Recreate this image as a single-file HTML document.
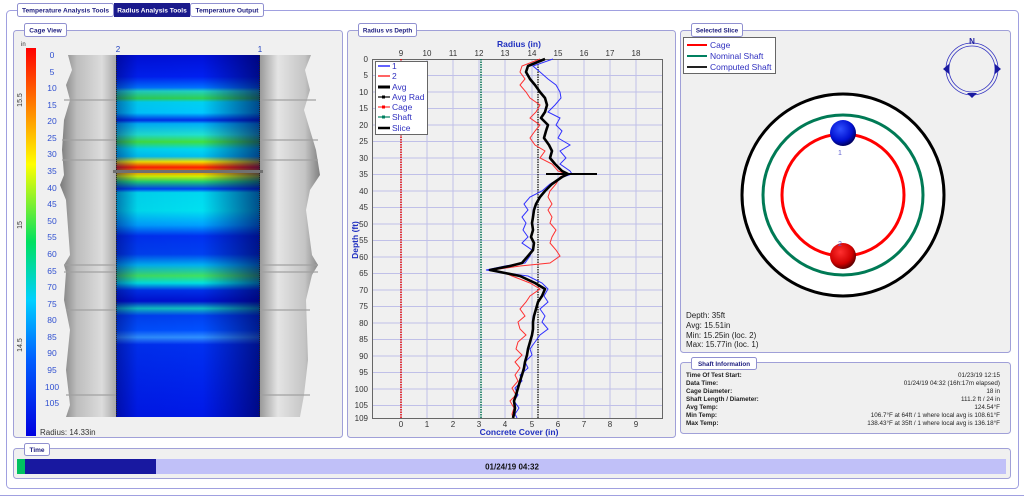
<!DOCTYPE html>
<html><head><meta charset="utf-8"><style>
html,body{margin:0;padding:0;background:#fff;width:1024px;height:498px;overflow:hidden}
svg text{font-family:"Liberation Sans",sans-serif}
</style></head><body>
<svg width="1024" height="498" viewBox="0 0 1024 498" xmlns="http://www.w3.org/2000/svg">
<defs>
<linearGradient id="cb" x1="0" y1="0" x2="0" y2="1">
<stop offset="0" stop-color="#ff0000"/><stop offset="0.15" stop-color="#ff8000"/><stop offset="0.3" stop-color="#ffff00"/><stop offset="0.5" stop-color="#00e060"/><stop offset="0.65" stop-color="#00d0ff"/><stop offset="0.8" stop-color="#0060ff"/><stop offset="1" stop-color="#0000e0"/>
</linearGradient>
<linearGradient id="gl" x1="0" y1="0" x2="1" y2="0">
<stop offset="0" stop-color="#7a7a7a"/><stop offset="0.3" stop-color="#bdbdbd"/><stop offset="0.75" stop-color="#dcdcdc"/><stop offset="1" stop-color="#a8a8a8"/>
</linearGradient>
<linearGradient id="gr" x1="0" y1="0" x2="1" y2="0">
<stop offset="0" stop-color="#9a9a9a"/><stop offset="0.3" stop-color="#e4e4e4"/><stop offset="0.75" stop-color="#c4c4c4"/><stop offset="1" stop-color="#808080"/>
</linearGradient>
<linearGradient id="hm" x1="0" y1="55" x2="0" y2="417" gradientUnits="userSpaceOnUse">
<stop offset="0" stop-color="#0010d8"/><stop offset="0.06" stop-color="#0020f0"/><stop offset="0.09" stop-color="#0070ff"/>
<stop offset="0.1" stop-color="#20d0c0"/><stop offset="0.12" stop-color="#30d050"/><stop offset="0.13" stop-color="#00d0f0"/>
<stop offset="0.16" stop-color="#00c8ff"/><stop offset="0.18" stop-color="#0030e8"/><stop offset="0.19" stop-color="#00b0f8"/>
<stop offset="0.22" stop-color="#20e0d0"/><stop offset="0.24" stop-color="#40e040"/><stop offset="0.26" stop-color="#00d8f0"/>
<stop offset="0.28" stop-color="#00c0f0"/><stop offset="0.295" stop-color="#f0e000"/><stop offset="0.31" stop-color="#ff2000"/>
<stop offset="0.325" stop-color="#f0a000"/><stop offset="0.335" stop-color="#d0f000"/><stop offset="0.35" stop-color="#20d070"/>
<stop offset="0.37" stop-color="#0040f0"/><stop offset="0.38" stop-color="#00d8f0"/><stop offset="0.43" stop-color="#00e0f0"/>
<stop offset="0.47" stop-color="#00a0ff"/><stop offset="0.5" stop-color="#0030f0"/><stop offset="0.55" stop-color="#0040f0"/>
<stop offset="0.58" stop-color="#00b0f0"/><stop offset="0.61" stop-color="#40e060"/><stop offset="0.63" stop-color="#00e0e0"/>
<stop offset="0.65" stop-color="#0030e8"/><stop offset="0.68" stop-color="#0010d0"/><stop offset="0.7" stop-color="#10c0c0"/>
<stop offset="0.72" stop-color="#0040f0"/><stop offset="0.76" stop-color="#0050ff"/><stop offset="0.78" stop-color="#3090ff"/>
<stop offset="0.8" stop-color="#0030f0"/><stop offset="1" stop-color="#0018e8"/>
</linearGradient>
<linearGradient id="hov" x1="0" y1="0" x2="1" y2="0">
<stop offset="0" stop-color="#000060" stop-opacity="0.45"/><stop offset="0.15" stop-color="#000060" stop-opacity="0.05"/><stop offset="0.6" stop-color="#000060" stop-opacity="0"/><stop offset="1" stop-color="#000050" stop-opacity="0.65"/>
</linearGradient>
<radialGradient id="bb" cx="0.4" cy="0.35" r="0.65"><stop offset="0" stop-color="#3050ff"/><stop offset="0.7" stop-color="#0010d0"/><stop offset="1" stop-color="#000060"/></radialGradient>
<radialGradient id="rb" cx="0.4" cy="0.35" r="0.65"><stop offset="0" stop-color="#ff3030"/><stop offset="0.7" stop-color="#d00000"/><stop offset="1" stop-color="#600000"/></radialGradient>
</defs>

<rect x="6.5" y="10.5" width="1012" height="478" rx="4" fill="#fff" stroke="#a0a0e0"/>
<line x1="0" y1="495.5" x2="1024" y2="495.5" stroke="#a0a0e0"/>
<rect x="17.5" y="3.5" width="96" height="13" rx="2" fill="#fff" stroke="#9090d0"/>
<text x="65.5" y="12.5" font-size="6.6" font-weight="bold" fill="#202080" text-anchor="middle">Temperature Analysis Tools</text>
<rect x="114" y="3" width="76" height="14" fill="#1a1a8c"/>
<text x="152" y="12.5" font-size="6.6" font-weight="bold" fill="#fff" text-anchor="middle">Radius Analysis Tools</text>
<rect x="190.5" y="3.5" width="73" height="13" rx="2" fill="#fff" stroke="#9090d0"/>
<text x="227" y="12.5" font-size="6.6" font-weight="bold" fill="#202080" text-anchor="middle">Temperature Output</text>

<rect x="13.5" y="30.5" width="329" height="407" rx="3" fill="#f0f0f0" stroke="#a0a0d8"/>
<rect x="347.5" y="30.5" width="328" height="407" rx="3" fill="#f0f0f0" stroke="#a0a0d8"/>
<rect x="680.5" y="30.5" width="330" height="322" rx="3" fill="#f0f0f0" stroke="#a0a0d8"/>
<rect x="680.5" y="362.5" width="330" height="71" rx="3" fill="#f0f0f0" stroke="#a0a0d8"/>
<rect x="13.5" y="448.5" width="997" height="30" rx="3" fill="#f0f0f0" stroke="#a0a0d8"/>

<rect x="24.5" y="23.5" width="42" height="13" rx="2" fill="#fff" stroke="#9090d0"/>
<text x="45.5" y="32.5" font-size="6.5" font-weight="bold" fill="#202080" text-anchor="middle">Cage View</text>
<rect x="358.5" y="23.5" width="58" height="13" rx="2" fill="#fff" stroke="#9090d0"/>
<text x="387.5" y="32.5" font-size="6.3" font-weight="bold" fill="#202080" text-anchor="middle">Radius vs Depth</text>
<rect x="691.5" y="23.5" width="51" height="13" rx="2" fill="#fff" stroke="#9090d0"/>
<text x="717" y="32.5" font-size="6.3" font-weight="bold" fill="#202080" text-anchor="middle">Selected Slice</text>
<rect x="691.5" y="357.5" width="65" height="12" rx="2" fill="#fff" stroke="#9090d0"/>
<text x="724" y="366" font-size="6.3" font-weight="bold" fill="#202080" text-anchor="middle">Shaft Information</text>
<rect x="24.5" y="443.5" width="25" height="12" rx="2" fill="#fff" stroke="#9090d0"/>
<text x="37" y="452" font-size="6.5" font-weight="bold" fill="#202080" text-anchor="middle">Time</text>

<text x="21" y="46" font-size="6" fill="#333">in</text>
<rect x="26" y="48" width="10" height="388" fill="url(#cb)"/>
<text transform="translate(22,100) rotate(-90)" font-size="7" fill="#333" text-anchor="middle">15.5</text>
<text transform="translate(22,225) rotate(-90)" font-size="7" fill="#333" text-anchor="middle">15</text>
<text transform="translate(22,345) rotate(-90)" font-size="7" fill="#333" text-anchor="middle">14.5</text>
<g font-size="8.5" fill="#3050d0" text-anchor="middle">
<text x="52" y="58">0</text><text x="52" y="75">5</text><text x="52" y="91">10</text><text x="52" y="108">15</text><text x="52" y="124">20</text><text x="52" y="141">25</text><text x="52" y="157">30</text><text x="52" y="174">35</text><text x="52" y="191">40</text><text x="52" y="207">45</text><text x="52" y="224">50</text><text x="52" y="240">55</text><text x="52" y="257">60</text><text x="52" y="274">65</text><text x="52" y="290">70</text><text x="52" y="307">75</text><text x="52" y="323">80</text><text x="52" y="340">85</text><text x="52" y="356">90</text><text x="52" y="373">95</text><text x="52" y="390">100</text><text x="52" y="406">105</text>
</g>
<path d="M116,55 L68,55 L72,70 L66,85 L70,100 L64,120 L62,150 L64,175 L60,185 L66,200 L70,255 L64,265 L66,272 L64,300 L70,330 L66,370 L70,405 L66,417 L116,417 Z" fill="url(#gl)"/>
<path d="M260,55 L311,55 L305,70 L310,90 L304,110 L316,150 L320,175 L310,190 L306,210 L312,255 L318,265 L312,275 L306,300 L308,360 L304,395 L300,417 L260,417 Z" fill="url(#gr)"/>
<g stroke="#a0a0a0" stroke-width="2" opacity="0.6">
<line x1="64" y1="100" x2="316" y2="100"/><line x1="62" y1="140" x2="318" y2="140"/><line x1="62" y1="160" x2="318" y2="160"/><line x1="64" y1="265" x2="318" y2="265"/><line x1="64" y1="272" x2="318" y2="272"/><line x1="66" y1="310" x2="310" y2="310"/><line x1="66" y1="395" x2="310" y2="395"/>
</g>
<rect x="116" y="55" width="144" height="362" fill="url(#hm)"/>
<rect x="116" y="55" width="144" height="362" fill="url(#hov)"/>
<line x1="116.5" y1="55" x2="116.5" y2="417" stroke="#222" stroke-dasharray="1,1"/>
<line x1="259.5" y1="55" x2="259.5" y2="417" stroke="#222" stroke-dasharray="1,1"/>
<rect x="113" y="170" width="150" height="3" fill="#707070"/>
<text x="118" y="52" font-size="8" fill="#2040c0" text-anchor="middle">2</text>
<text x="260" y="52" font-size="8" fill="#2040c0" text-anchor="middle">1</text>
<text x="40" y="435" font-size="8" fill="#333">Radius: 14.33in</text>

<text x="519" y="47" font-size="8.5" font-weight="bold" fill="#2030c0" text-anchor="middle">Radius (in)</text>
<text x="519" y="435" font-size="8.5" font-weight="bold" fill="#2030c0" text-anchor="middle">Concrete Cover (in)</text>
<text transform="translate(358,240) rotate(-90)" font-size="8.5" font-weight="bold" fill="#2030c0" text-anchor="middle">Depth (ft)</text>
<g stroke="#c0c0e8" stroke-width="1">
<line x1="401" y1="59" x2="401" y2="418"/><line x1="427" y1="59" x2="427" y2="418"/><line x1="453" y1="59" x2="453" y2="418"/><line x1="479" y1="59" x2="479" y2="418"/><line x1="505" y1="59" x2="505" y2="418"/><line x1="532" y1="59" x2="532" y2="418"/><line x1="558" y1="59" x2="558" y2="418"/><line x1="584" y1="59" x2="584" y2="418"/><line x1="610" y1="59" x2="610" y2="418"/><line x1="636" y1="59" x2="636" y2="418"/>
<line x1="372" y1="75.5" x2="662" y2="75.5"/><line x1="372" y1="92" x2="662" y2="92"/><line x1="372" y1="108.5" x2="662" y2="108.5"/><line x1="372" y1="125" x2="662" y2="125"/><line x1="372" y1="141.5" x2="662" y2="141.5"/><line x1="372" y1="158" x2="662" y2="158"/><line x1="372" y1="174.5" x2="662" y2="174.5"/><line x1="372" y1="191" x2="662" y2="191"/><line x1="372" y1="207.5" x2="662" y2="207.5"/><line x1="372" y1="224" x2="662" y2="224"/><line x1="372" y1="240.5" x2="662" y2="240.5"/><line x1="372" y1="257" x2="662" y2="257"/><line x1="372" y1="273.5" x2="662" y2="273.5"/><line x1="372" y1="290" x2="662" y2="290"/><line x1="372" y1="306.5" x2="662" y2="306.5"/><line x1="372" y1="323" x2="662" y2="323"/><line x1="372" y1="339.5" x2="662" y2="339.5"/><line x1="372" y1="356" x2="662" y2="356"/><line x1="372" y1="372.5" x2="662" y2="372.5"/><line x1="372" y1="389" x2="662" y2="389"/><line x1="372" y1="405.5" x2="662" y2="405.5"/>
</g>
<rect x="372.5" y="59.5" width="290" height="359" fill="none" stroke="#666"/>
<g font-size="8" fill="#333" text-anchor="middle">
<text x="401" y="56">9</text><text x="427" y="56">10</text><text x="453" y="56">11</text><text x="479" y="56">12</text><text x="505" y="56">13</text><text x="532" y="56">14</text><text x="558" y="56">15</text><text x="584" y="56">16</text><text x="610" y="56">17</text><text x="636" y="56">18</text>
<text x="401" y="427">0</text><text x="427" y="427">1</text><text x="453" y="427">2</text><text x="479" y="427">3</text><text x="505" y="427">4</text><text x="532" y="427">5</text><text x="558" y="427">6</text><text x="584" y="427">7</text><text x="610" y="427">8</text><text x="636" y="427">9</text>
</g>
<g font-size="8" fill="#333" text-anchor="end">
<text x="368" y="62">0</text><text x="368" y="78">5</text><text x="368" y="95">10</text><text x="368" y="111">15</text><text x="368" y="128">20</text><text x="368" y="144">25</text><text x="368" y="161">30</text><text x="368" y="177">35</text><text x="368" y="194">40</text><text x="368" y="210">45</text><text x="368" y="227">50</text><text x="368" y="243">55</text><text x="368" y="260">60</text><text x="368" y="276">65</text><text x="368" y="293">70</text><text x="368" y="309">75</text><text x="368" y="326">80</text><text x="368" y="342">85</text><text x="368" y="359">90</text><text x="368" y="375">95</text><text x="368" y="392">100</text><text x="368" y="408">105</text><text x="368" y="421">109</text>
</g>
<line x1="401" y1="59" x2="401" y2="418" stroke="#e00000" stroke-width="1.5" stroke-dasharray="1.5,1"/>
<line x1="481" y1="59" x2="481" y2="418" stroke="#007050" stroke-width="1.5" stroke-dasharray="1.5,1"/>
<line x1="538" y1="59" x2="538" y2="418" stroke="#000" stroke-width="1.2" stroke-dasharray="1.5,1"/>
<polyline fill="none" stroke="#3030ff" stroke-width="1" points="553,59 533,66 540,72 548,79 556,85 560,92 561,98 555,105 548,112 560,118 556,125 562,131 558,138 570,145 560,151 566,158 560,164 570,171 572,174 563,177 550,184 542,191 530,197 524,204 528,210 522,217 526,223 523,230 528,237 522,243 532,250 530,256 525,263 505,266 486,270 505,273 528,276 542,283 548,289 544,296 548,302 540,309 545,316 542,322 548,329 540,335 535,342 530,349 532,355 525,362 528,368 520,375 522,381 515,388 518,395 514,401 519,408 515,414 517,418"/>
<polyline fill="none" stroke="#ff3030" stroke-width="1" points="540,59 522,66 520,72 525,79 520,85 526,92 530,98 540,105 536,112 530,118 540,125 535,131 530,138 535,145 545,151 540,158 552,164 558,171 566,174 560,177 556,184 550,191 548,197 552,204 548,210 552,217 550,223 556,230 552,237 550,243 556,250 560,256 550,263 520,266 492,270 505,273 512,276 530,283 540,289 530,296 526,302 520,309 525,316 518,322 520,329 526,335 518,342 516,349 522,355 515,362 520,368 515,375 518,381 512,388 516,395 510,401 514,408 512,414 513,418"/>
<polyline fill="none" stroke="#000" stroke-width="2.6" stroke-linejoin="round" points="545,59 528,66 526,72 530,79 535,85 540,92 545,98 547,105 545,112 541,118 548,125 546,131 544,138 549,145 552,151 550,158 555,164 562,171 568,174 562,177 552,184 545,191 540,197 536,204 534,210 533,217 532,223 533,230 531,237 534,243 533,250 528,256 522,263 510,266 490,270 505,273 520,276 535,283 545,289 542,296 538,302 536,309 534,316 533,322 533,329 532,335 530,342 528,349 527,355 525,362 524,368 522,375 520,381 518,388 516,395 514,401 515,408 514,414 513,418"/>
<line x1="546" y1="174" x2="597" y2="174" stroke="#000" stroke-width="2"/>
<rect x="375.5" y="61.5" width="52" height="73" fill="#fff" stroke="#666"/>
<g font-size="8.5" fill="#3030c0">
<line x1="378" y1="66" x2="390" y2="66" stroke="#3030ff" stroke-width="1.5"/><text x="392" y="69">1</text>
<line x1="378" y1="76" x2="390" y2="76" stroke="#ff3030" stroke-width="1.5"/><text x="392" y="79">2</text>
<line x1="378" y1="87" x2="390" y2="87" stroke="#000" stroke-width="3"/><text x="392" y="90">Avg</text>
<line x1="378" y1="97" x2="390" y2="97" stroke="#000" stroke-width="1.2"/><rect x="382" y="95.5" width="3" height="3" fill="#000"/><text x="392" y="100">Avg Rad</text>
<line x1="378" y1="107" x2="390" y2="107" stroke="#ff3030" stroke-width="1.2"/><rect x="382" y="105.5" width="3" height="3" fill="#f00"/><text x="392" y="110">Cage</text>
<line x1="378" y1="117" x2="390" y2="117" stroke="#008060" stroke-width="1.2"/><rect x="382" y="115.5" width="3" height="3" fill="#008060"/><text x="392" y="120">Shaft</text>
<line x1="378" y1="128" x2="390" y2="128" stroke="#000" stroke-width="2.5"/><text x="392" y="131">Slice</text>
</g>

<rect x="683.5" y="37.5" width="92" height="36" fill="#fff" stroke="#666"/>
<g font-size="8.5" fill="#3030c0">
<line x1="687" y1="45" x2="707" y2="45" stroke="#f00" stroke-width="2"/><text x="710" y="48">Cage</text>
<line x1="687" y1="56" x2="707" y2="56" stroke="#008060" stroke-width="2"/><text x="710" y="59">Nominal Shaft</text>
<line x1="687" y1="67" x2="707" y2="67" stroke="#222" stroke-width="2"/><text x="710" y="70">Computed Shaft</text>
</g>
<circle cx="972" cy="69" r="26" fill="none" stroke="#3030c0" stroke-width="0.8"/>
<circle cx="972" cy="69" r="23" fill="none" stroke="#3030c0" stroke-width="0.8"/>
<text x="972" y="44" font-size="8" font-weight="bold" fill="#2020a0" text-anchor="middle" font-family="Liberation Serif">N</text>
<path d="M943,69 L949,64 L949,74 Z M1001,69 L995,64 L995,74 Z M972,98 L967,93 L977,93 Z" fill="#1a1aa0"/>
<circle cx="843" cy="195" r="101" fill="#fff" stroke="#000" stroke-width="3"/>
<circle cx="843" cy="195" r="80" fill="none" stroke="#007a55" stroke-width="3"/>
<circle cx="843" cy="195" r="61" fill="none" stroke="#f00" stroke-width="3"/>
<circle cx="843" cy="133" r="13" fill="url(#bb)"/>
<circle cx="843" cy="256" r="13" fill="url(#rb)"/>
<text x="838" y="155" font-size="7" fill="#6060d0">1</text>
<text x="838" y="246" font-size="7" fill="#6060d0">2</text>
<g font-size="8" fill="#222">
<text x="686" y="318">Depth: 35ft</text><text x="686" y="328">Avg: 15.51in</text><text x="686" y="338">Min: 15.25in (loc. 2)</text><text x="686" y="347">Max: 15.77in (loc. 1)</text>
</g>

<g font-size="6.3" fill="#222">
<g font-weight="bold">
<text x="686" y="377">Time Of Test Start:</text><text x="686" y="385">Data Time:</text><text x="686" y="393">Cage Diameter:</text><text x="686" y="401">Shaft Length / Diameter:</text><text x="686" y="409">Avg Temp:</text><text x="686" y="417">Min Temp:</text><text x="686" y="425">Max Temp:</text>
</g>
<g text-anchor="end">
<text x="1000" y="377">01/23/19 12:15</text><text x="1000" y="385">01/24/19 04:32 (16h:17m elapsed)</text><text x="1000" y="393">18 in</text><text x="1000" y="401">111.2 ft / 24 in</text><text x="1000" y="409">124.54°F</text><text x="1000" y="417">106.7°F at 64ft / 1 where local avg is 108.61°F</text><text x="1000" y="425">138.43°F at 35ft / 1 where local avg is 136.18°F</text>
</g>
</g>

<rect x="17" y="459" width="989" height="15" fill="#c0c0f8"/>
<rect x="17" y="459" width="8" height="15" fill="#00c060"/>
<rect x="25" y="459" width="131" height="15" fill="#1818a0"/>
<text x="512" y="469.5" font-size="8" font-weight="bold" fill="#111" text-anchor="middle">01/24/19 04:32</text>
</svg>
</body></html>
